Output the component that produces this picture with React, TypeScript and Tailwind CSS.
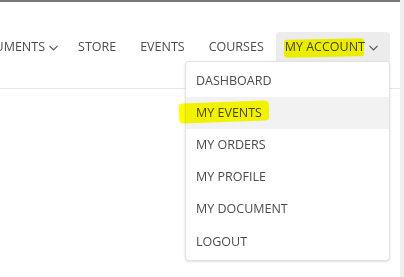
const navItems = ['DOCUMENTS', 'STORE', 'EVENTS', 'COURSES'];
const menuItems = ['DASHBOARD', 'MY EVENTS', 'MY ORDERS', 'MY PROFILE', 'MY DOCUMENT', 'LOGOUT'];

const Chevron = () => (
  <svg width="9" height="6" viewBox="0 0 9 6" className="ml-[4px] mt-[1px] shrink-0">
    <polyline points="0.5,0.8 4.5,4.8 8.5,0.8" fill="none" stroke="#555" strokeWidth="1.2" />
  </svg>
);

const App = () => {
  return (
    <div
      className="flex w-[404px] h-[277px] bg-white overflow-hidden text-[#4c4c4c] text-[12.5px]"
      style={{ fontFamily: '"Open Sans", "Liberation Sans", sans-serif' }}
    >
      <div className="relative flex-1 min-w-0 flex flex-col border-t-2 border-[#777]">
        {/* 상단 메뉴 */}
        <div className="h-[87px] border-b border-[#e6e6e6] flex items-center justify-end pr-[10px]">
          <div className="flex items-center shrink-0 mt-[5px]">
            {navItems.map((item, i) => (
              <div key={item} className={`flex items-center shrink-0 ${i === 0 ? '' : i === 1 ? 'ml-[20px]' : 'ml-[24px]'}`}>
                <span>{item}</span>
                {i === 0 && <Chevron />}
              </div>
            ))}
            <div className="relative ml-[12px] flex items-center h-[32px] pl-[9px] pr-[12px] bg-[#ececec] rounded-[4px]">
              <span className="absolute left-[8px] top-[7px] w-[80px] h-[18px] bg-[#ffff00] rounded-[3px] -rotate-1 mix-blend-multiply" />
              <span className="relative mix-blend-multiply">MY ACCOUNT</span>
              <Chevron />
            </div>
          </div>
        </div>

        {/* 드롭다운 */}
        <div className="absolute left-[185px] top-[59px] w-[205px] h-[200px] bg-white border border-[#e2e2e2] rounded-[4px] shadow-sm pt-[3px]">
          {menuItems.map((item) => (
            <div
              key={item}
              className={`relative flex items-center h-[32.2px] pl-[10px] ${item === 'MY EVENTS' ? 'bg-[#f2f2f2]' : ''}`}
            >
              {item === 'MY EVENTS' && (
                <span className="absolute left-[-7px] top-[5px] w-[90px] h-[20px] bg-[#ffff00] rounded-[4px] -rotate-2 mix-blend-multiply" />
              )}
              <span className="relative mix-blend-multiply">{item}</span>
            </div>
          ))}
        </div>
      </div>
      <div className="w-[4px] shrink-0 bg-[#efefef]" />
    </div>
  );
};

export default App;
